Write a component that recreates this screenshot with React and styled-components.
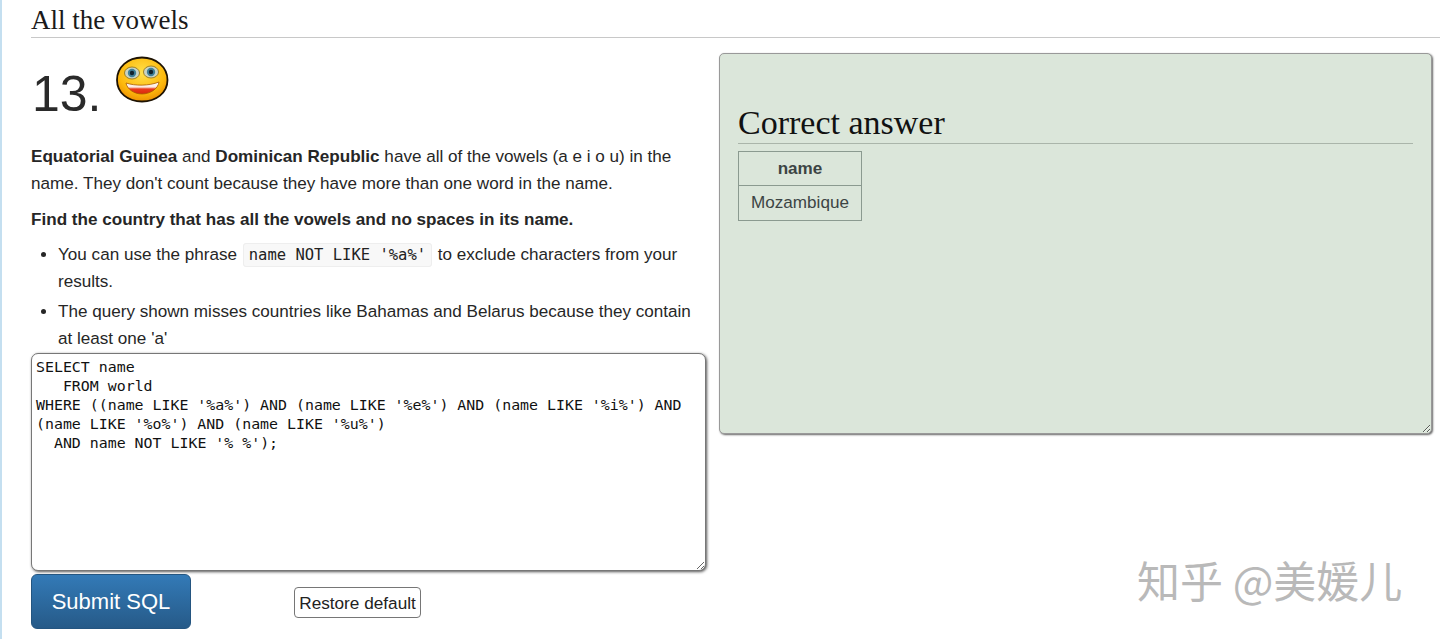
import React from "react";
import styled, { createGlobalStyle } from "styled-components";

const Global = createGlobalStyle`
  html, body { margin: 0; padding: 0; background: #fff; }
  body { font-family: "Liberation Sans", Arial, sans-serif; color: #222; }
`;
const Page = styled.div`
  position: relative;
  width: 1440px;
  height: 639px;
  box-sizing: border-box;
  overflow: hidden;
  border-left: 2px solid #c4dff0;
  padding-left: 29px;
`;
const Heading = styled.h2`
  margin: 0;
  height: 37px;
  box-sizing: content-box;
  border-bottom: 1px solid #c8c8c8;
  font: 400 27px/41px "Liberation Serif", Georgia, serif;
  color: #1a1a1a;
`;
const Columns = styled.div`
  display: flex;
  align-items: flex-start;
`;
const Left = styled.div`
  width: 675px;
  flex: none;
`;
const Title = styled.div`
  display: flex;
  align-items: flex-start;
  height: 105px;
  padding-left: 1px;
`;
const Num = styled.h1`
  margin: 26px 0 0;
  font: 400 50px/60px "Liberation Sans", Arial, sans-serif;
  color: #2a2a2a;
`;
const Smiley = styled.svg`
  width: 54px;
  height: 48px;
  margin: 18px 0 0 14px;
  flex: none;
`;
const Para = styled.p`
  margin: 0 0 9px;
  font-size: 17.1px;
  line-height: 27px;
  color: #262626;
  &:last-of-type { margin-bottom: 8px; }
`;
const List = styled.ul`
  margin: 0;
  padding: 0 0 0 27px;
  list-style: disc;
`;
const Item = styled.li`
  font-size: 17.1px;
  line-height: 27px;
  margin-bottom: 3px;
  color: #262626;
  &:last-child { margin-bottom: 0; }
`;
const Code = styled.code`
  font: 400 15.5px "DejaVu Sans Mono", monospace;
  background: #f8f8f8;
  border: 1px solid #eee;
  border-radius: 3px;
  padding: 2px 5px;
  margin: 0 1px;
  color: #222;
`;
const Editor = styled.textarea`
  display: block;
  box-sizing: border-box;
  width: 675px;
  height: 218px;
  margin: 1px 0 3px;
  padding: 4px 4px;
  border: 1px solid #777;
  border-radius: 7px;
  box-shadow: 1px 1px 3px #555;
  background: #fff;
  font: 400 14.9px/19px "DejaVu Sans Mono", monospace;
  color: #111;
  outline: none;
  resize: both;
`;
const Actions = styled.div`
  display: flex;
  align-items: center;
`;
const Submit = styled.button`
  width: 160px;
  height: 55px;
  padding: 0;
  border: 1px solid #245580;
  border-radius: 6px;
  background: linear-gradient(#337ab7, #265a88);
  color: #fff;
  font: 400 22px "Liberation Sans", Arial, sans-serif;
`;
const Restore = styled.button`
  width: 127px;
  height: 31px;
  margin: 2px 0 0 103px;
  padding: 1px 0 0;
  border: 1px solid #767676;
  border-radius: 4px;
  background: #fff;
  color: #222;
  font: 400 17.2px "Liberation Sans", Arial, sans-serif;
`;
const Panel = styled.div`
  box-sizing: border-box;
  width: 713px;
  height: 381px;
  margin: 15px 0 0 13px;
  padding: 50px 18px 0 18px;
  background: #dbe6da;
  border: 1px solid #999;
  border-radius: 5px;
  box-shadow: 1px 1px 2px #666;
  resize: both;
  overflow: hidden;
`;
const AnswerTitle = styled.h2`
  margin: 0 0 7px;
  height: 39px;
  border-bottom: 1px solid #aab5aa;
  font: 400 34px/37px "Liberation Serif", Georgia, serif;
  color: #111;
`;
const Table = styled.table`
  border-collapse: collapse;
  width: 124px;
  font-size: 17.1px;
  color: #3c4444;
`;
const Head = styled.th`
  border: 1px solid #8b9a90;
  height: 32px;
  padding: 1px 0 0;
  font-weight: 700;
`;
const Cell = styled.td`
  border: 1px solid #8b9a90;
  height: 34px;
  padding: 0;
  text-align: center;
`;
const Watermark = styled.div`
  position: absolute;
  left: 1135px;
  top: 554px;
  font: 400 43px/50px "Noto Sans CJK SC", "Liberation Sans", sans-serif;
  color: #b9b9b9;
  text-shadow: -2px -2px 0 #fff;
  white-space: nowrap;
  pointer-events: none;
`;

const sql = `SELECT name
   FROM world
WHERE ((name LIKE '%a%') AND (name LIKE '%e%') AND (name LIKE '%i%') AND
(name LIKE '%o%') AND (name LIKE '%u%')
  AND name NOT LIKE '% %');`;

export default function App() {
  return (
    <Page>
      <Global />
      <Heading>All the vowels</Heading>
      <Columns>
        <Left>
          <Title>
            <Num>13.</Num>
            <Smiley viewBox="0 0 54 48">
              <defs>
                <radialGradient id="face" cx="50%" cy="35%" r="70%">
                  <stop offset="0%" stopColor="#ffe14a" />
                  <stop offset="65%" stopColor="#fdb90c" />
                  <stop offset="100%" stopColor="#e98600" />
                </radialGradient>
                <linearGradient id="mouth" x1="0" y1="0" x2="0" y2="1">
                  <stop offset="0%" stopColor="#fff" />
                  <stop offset="42%" stopColor="#fde9de" />
                  <stop offset="58%" stopColor="#ea3a1c" />
                  <stop offset="100%" stopColor="#d82a0c" />
                </linearGradient>
              </defs>
              <path d="M26 1.5C40 1.5 51.5 11 51.5 24C51.5 37 40 45.5 26 45.5C12 45.5 1 37 1 24C1 11 12 1.5 26 1.5Z" fill="url(#face)" stroke="#1d1203" strokeWidth="1.8" />
              <ellipse cx="16" cy="17" rx="7.5" ry="6" fill="#c9d4c4" stroke="#8a6a10" strokeWidth=".8" />
              <ellipse cx="35" cy="16" rx="7.5" ry="6" fill="#c9d4c4" stroke="#8a6a10" strokeWidth=".8" />
              <circle cx="16" cy="17" r="4.2" fill="#3f8098" />
              <circle cx="35" cy="16" r="4.2" fill="#3f8098" />
              <circle cx="16" cy="17" r="2.2" fill="#12222c" />
              <circle cx="35" cy="16" r="2.2" fill="#12222c" />
              <path d="M10 27C19 30 33 30 43 26C42 33 34 38 26 38C18 38 11 33 10 27Z" fill="url(#mouth)" stroke="#a85a00" strokeWidth=".8" />
            </Smiley>
          </Title>
          <Para>
            <b>Equatorial Guinea</b> and <b>Dominican Republic</b> have all of the vowels (a e i o u) in the name. They don't count because they have more than one word in the name.
          </Para>
          <Para>
            <b>Find the country that has all the vowels and no spaces in its name.</b>
          </Para>
          <List>
            <Item>
              You can use the phrase <Code>name NOT LIKE '%a%'</Code> to exclude characters from your results.
            </Item>
            <Item>
              The query shown misses countries like Bahamas and Belarus because they contain at least one 'a'
            </Item>
          </List>
          <Editor defaultValue={sql} spellCheck={false} />
          <Actions>
            <Submit>Submit SQL</Submit>
            <Restore>Restore default</Restore>
          </Actions>
        </Left>
        <Panel>
          <AnswerTitle>Correct answer</AnswerTitle>
          <Table>
            <thead>
              <tr><Head>name</Head></tr>
            </thead>
            <tbody>
              <tr><Cell>Mozambique</Cell></tr>
            </tbody>
          </Table>
        </Panel>
      </Columns>
      <Watermark>知乎 @美媛儿</Watermark>
    </Page>
  );
}
